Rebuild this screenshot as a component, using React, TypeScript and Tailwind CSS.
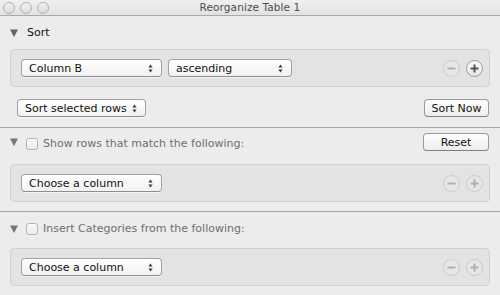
import React from 'react';

const font = { fontFamily: '"DejaVu Sans", "Liberation Sans", sans-serif' };

const Arrows: React.FC = () => (
    <svg width="5" height="9" viewBox="0 0 5 9" className="shrink-0">
        <path d="M2.5 0.5 L4.6 3.4 L0.4 3.4 Z" fill="#3a3a3a" />
        <path d="M2.5 8.5 L4.6 5.6 L0.4 5.6 Z" fill="#3a3a3a" />
    </svg>
);

const Select: React.FC<{ label: string; width: string }> = ({ label, width }) => (
    <div
        className={`${width} h-[18px] flex items-center justify-between pl-[7px] pr-[8px] rounded-[4px] border border-[#a2a2a2] border-b-[#8e8e8e] bg-gradient-to-b from-white to-[#f1f1f1] shadow-[0_1px_0_rgba(255,255,255,0.6)] text-[11px] text-[#111]`}
    >
        <span className="leading-none">{label}</span>
        <Arrows />
    </div>
);

const Button: React.FC<{ label: string; width: string }> = ({ label, width }) => (
    <div
        className={`${width} h-[18px] flex items-center justify-center rounded-[4px] border border-[#9a9a9a] border-b-[#808080] bg-gradient-to-b from-white to-[#ededed] text-[11px] text-[#111]`}
    >
        <span className="leading-none">{label}</span>
    </div>
);

const Round: React.FC<{ sign: '+' | '-'; active: boolean }> = ({ sign, active }) => (
    <div
        className={`w-[17px] h-[17px] rounded-full border flex items-center justify-center ${
            active ? 'border-[#9c9c9c] bg-gradient-to-b from-[#fbfbfb] to-[#e6e6e6]' : 'border-[#cacaca] bg-[#e6e6e6]'
        }`}
    >
        <svg width="9" height="9" viewBox="0 0 9 9">
            <rect x="0.5" y="3.5" width="8" height="2" fill={active ? '#555' : '#b0b0b0'} />
            {sign === '+' && <rect x="3.5" y="0.5" width="2" height="8" fill={active ? '#555' : '#b0b0b0'} />}
        </svg>
    </div>
);

const Triangle: React.FC<{ color: string }> = ({ color }) => (
    <svg width="8" height="8" viewBox="0 0 8 8" className="shrink-0">
        <path d="M0 0.5 L8 0.5 L4 8 Z" fill={color} />
    </svg>
);

const Checkbox: React.FC = () => (
    <div className="w-[12px] h-[12px] rounded-[3px] border border-[#b4b4b4] bg-gradient-to-b from-[#fafafa] to-[#ececec]" />
);

const RuleBox: React.FC<{ label: string; width: string; extra?: React.ReactNode; minusActive: boolean; plusActive: boolean }> = ({
    label,
    width,
    extra,
    minusActive,
    plusActive
}) => (
    <div className="mx-[10px] h-[38px] rounded-[4px] border border-[#d1d1d1] bg-[#e3e3e3] flex items-center pl-[10px] pr-[6px]">
        <div className="flex gap-[6px]">
            <Select label={label} width={width} />
            {extra}
        </div>
        <div className="ml-auto flex gap-[6px]">
            <Round sign="-" active={minusActive} />
            <Round sign="+" active={plusActive} />
        </div>
    </div>
);

export default function App() {
    return (
        <div className="w-[500px] h-[295px] bg-[#ececec] overflow-hidden" style={font}>
            {/* Title bar */}
            <div className="h-[16px] border-b border-[#a9a9a9] bg-gradient-to-b from-[#f0f0f0] to-[#e2e2e2] flex items-center relative">
                <div className="flex gap-[5px] pl-[3px]">
                    {[0, 1, 2].map(i => (
                        <div key={i} className="w-[12px] h-[12px] rounded-full border border-[#b0b0b0] bg-gradient-to-b from-[#f3f3f3] to-[#dcdcdc]" />
                    ))}
                </div>
                <div className="absolute inset-0 flex items-center justify-center text-[10.5px] text-[#4d4d4d] tracking-[0.1px]">
                    Reorganize Table 1
                </div>
            </div>

            {/* Sort */}
            <div className="mt-[8px] h-[18px] flex items-center pl-[10px] gap-[9px]">
                <Triangle color="#666" />
                <span className="text-[11px] text-[#111]">Sort</span>
            </div>
            <div className="mt-[7px]">
                <RuleBox
                    label="Column B"
                    width="w-[141px]"
                    extra={<Select label="ascending" width="w-[124px]" />}
                    minusActive={false}
                    plusActive={true}
                />
            </div>
            <div className="mt-[12px] flex items-center pl-[17px] pr-[11px]">
                <Select label="Sort selected rows" width="w-[129px]" />
                <div className="ml-auto">
                    <Button label="Sort Now" width="w-[65px]" />
                </div>
            </div>
            <div className="mt-[10px] h-px bg-[#a5a5a5]" />

            {/* Filter */}
            <div className="mt-[5px] h-[18px] flex items-center pl-[10px] pr-[11px]">
                <Triangle color="#777" />
                <div className="ml-[8px] mt-[4px]">
                    <Checkbox />
                </div>
                <span className="ml-[5px] mt-[4px] text-[11px] text-[#6f6f6f]">Show rows that match the following:</span>
                <div className="ml-auto">
                    <Button label="Reset" width="w-[66px]" />
                </div>
            </div>
            <div className="mt-[13px]">
                <RuleBox label="Choose a column" width="w-[141px]" minusActive={false} plusActive={false} />
            </div>
            <div className="mt-[9px] h-px bg-[#a5a5a5]" />

            {/* Categories */}
            <div className="mt-[8px] h-[18px] flex items-center pl-[10px]">
                <Triangle color="#777" />
                <div className="ml-[8px]">
                    <Checkbox />
                </div>
                <span className="ml-[5px] text-[11px] text-[#6f6f6f]">Insert Categories from the following:</span>
            </div>
            <div className="mt-[10px]">
                <RuleBox label="Choose a column" width="w-[141px]" minusActive={false} plusActive={false} />
            </div>
        </div>
    );
}
